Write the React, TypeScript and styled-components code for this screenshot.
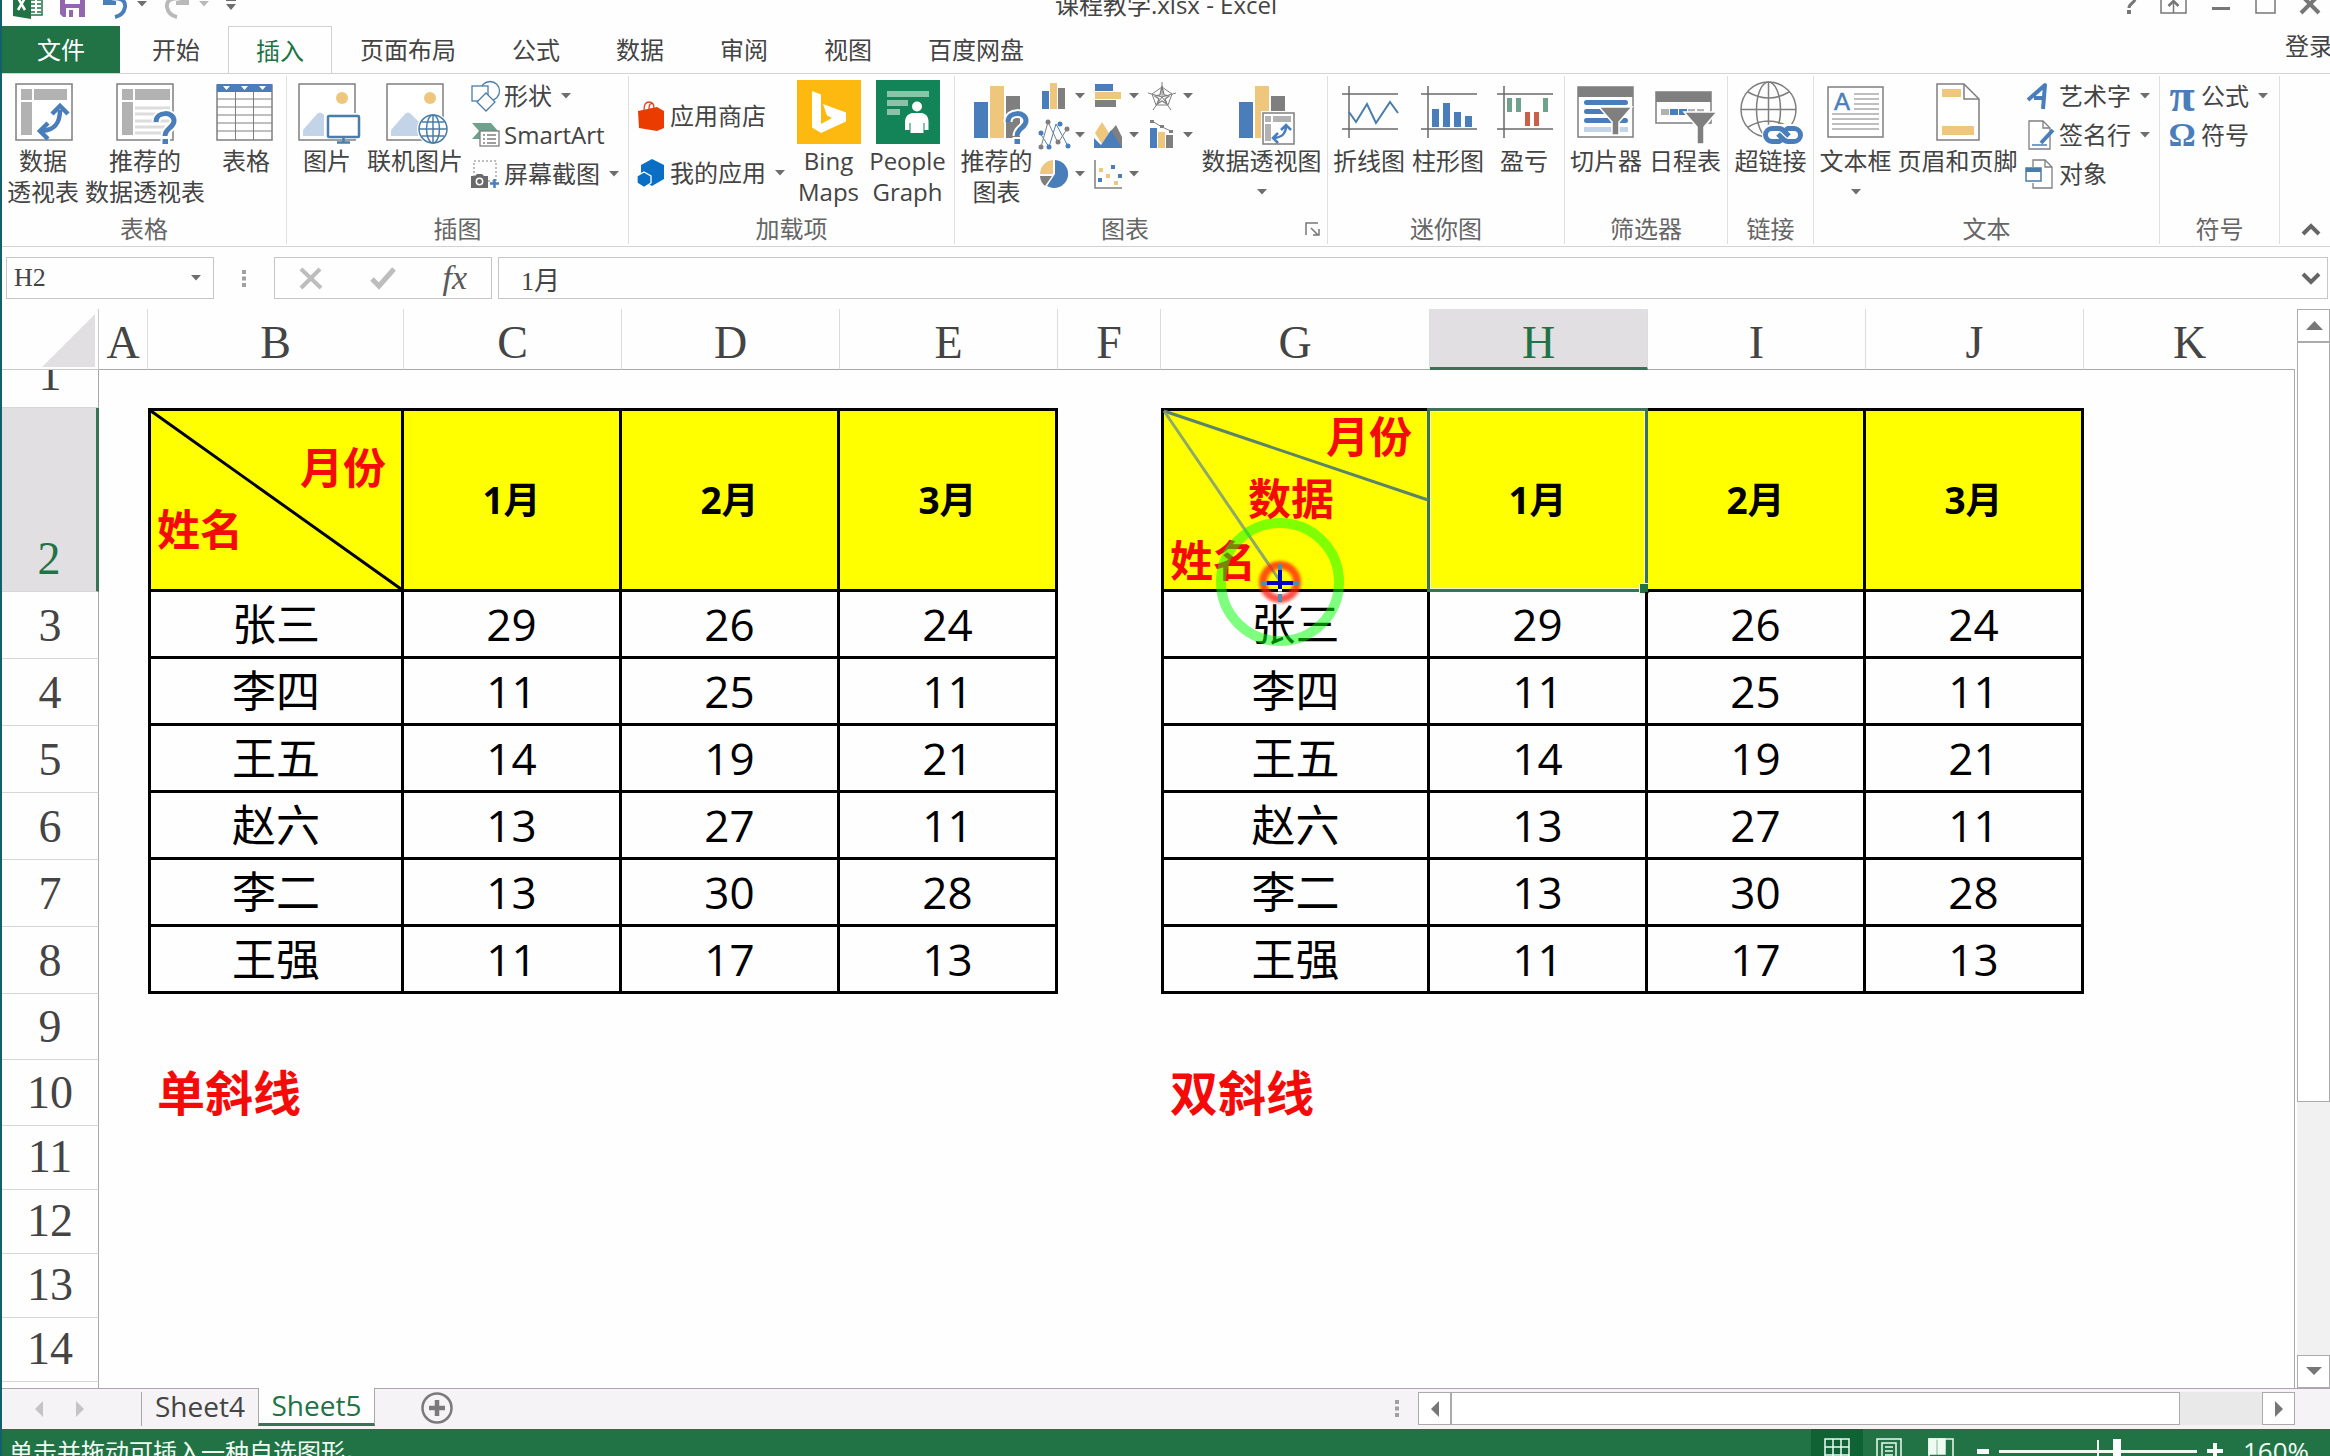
import React from "react";
import styled, { createGlobalStyle, css } from "styled-components";

const BLUE = "#4a7ebb";
const TAN = "#eec67c";
const GRAY = "#7f7f7f";
const SILVER = "#b2b2b2";
const GREEN = "#217346";
const INK = "#444444";
const LINE = "#d2d2d2";
const UI = '"Open Sans", "Noto Sans CJK SC", sans-serif';
const SERIF = '"Liberation Serif", "Noto Sans CJK SC", serif';

const GlobalStyle = createGlobalStyle`
  * { box-sizing: border-box; }
  body { margin: 0; background: #fefefe; }
  button { border: 0; padding: 0; margin: 0; background: none; color: inherit; font: inherit; cursor: pointer; }
  input { font: inherit; color: inherit; outline: none; }
  svg { display: block; overflow: visible; flex: none; }
`;

const Window = styled.div`
  height: 100vh;
  display: flex;
  flex-direction: column;
  overflow: hidden;
  border-left: 2px solid #12606c;
  background: #fefefe;
  color: ${INK};
  font: 24px/31px ${UI};
  white-space: nowrap;
`;

/* ---------- title bar ---------- */

const TitleBar = styled.header`
  flex: 0 0 26px;
  display: flex;
  align-items: flex-end;
  overflow: hidden;
`;

const TitleRow = styled.div`
  flex: 1;
  height: 44px;
  display: grid;
  grid-template-columns: 1fr auto 1fr;
  align-items: center;
`;

const QuickAccess = styled.div`
  display: flex;
  align-items: center;
  gap: 17px;
  padding-left: 11px;
`;

const SplitButton = styled.div`
  display: flex;
  align-items: center;
  gap: 9px;
`;

const Title = styled.h1`
  margin: 0;
  font: inherit;
`;

const WindowButtons = styled.div`
  display: flex;
  justify-content: flex-end;
  align-items: center;
  gap: 24px;
  padding-right: 10px;
`;

/* ---------- tabs ---------- */

const TabStrip = styled.nav`
  flex: 0 0 48px;
  display: flex;
  align-items: stretch;
  border-bottom: 1px solid ${LINE};
  overflow: hidden;
`;

const FileTab = styled.button`
  width: 118px;
  margin-right: 4px;
  background: ${GREEN};
  color: #fff;
`;

const Tab = styled.button<{ $active?: boolean }>`
  padding: 0 28px;
  ${(p) =>
    p.$active &&
    css`
      padding: 0 27px;
      border: 1px solid ${LINE};
      border-bottom: 0;
      color: ${GREEN};
    `}
`;

const SignIn = styled.a`
  margin-left: auto;
  margin-right: -3px;
  align-self: center;
  padding-bottom: 8px;
  color: inherit;
  text-decoration: none;
`;

/* ---------- ribbon ---------- */

const Ribbon = styled.div`
  flex: 0 0 173px;
  display: flex;
  border-bottom: 1px solid ${LINE};
`;

const GroupBox = styled.section`
  display: flex;
  flex-direction: column;
  margin: 2px 0;
  border-right: 1px solid #e0e0e0;
`;

const GroupBody = styled.div<{ $end?: number }>`
  flex: 1;
  display: flex;
  padding-right: ${(p) => p.$end ?? 0}px;
`;

const GroupFooter = styled.div<{ $launcher?: boolean }>`
  position: relative;
  padding-right: ${(p) => (p.$launcher ? 32 : 0)}px;
  text-align: center;
  color: #666;
`;

const Launcher = styled.button`
  position: absolute;
  right: 7px;
  top: 9px;
`;

const BigButton = styled.button<{ $w: number }>`
  width: ${(p) => p.$w}px;
  display: flex;
  flex-direction: column;
  align-items: center;
  padding-top: 4px;
  svg + span { margin-top: 1px; }
`;

const BigArrow = styled.span`
  height: 31px;
  display: flex;
  align-items: center;
`;

const Stack = styled.div<{ $w: number; $row?: number; $top?: number }>`
  width: ${(p) => p.$w}px;
  padding-top: ${(p) => p.$top ?? 0}px;
  display: flex;
  flex-direction: column;
  align-items: flex-start;
  > * { height: ${(p) => p.$row ?? 39}px; }
`;

const SmallButton = styled.button`
  display: flex;
  align-items: center;
  gap: 5px;
  padding-left: 8px;
  span + svg { margin-left: 4px; }
`;

const ChartGrid = styled.div`
  display: grid;
  grid-template-columns: repeat(3, 54px);
  grid-auto-rows: 39px;
  align-content: start;
  padding-left: 2px;
  button {
    display: flex;
    align-items: center;
    gap: 7px;
  }
`;

const Greek = styled.span<{ $size: number }>`
  width: 28px;
  text-align: center;
  font: bold ${(p) => p.$size}px/34px "Liberation Serif", serif;
  color: ${BLUE};
`;

const Collapse = styled.button`
  margin: auto 10px 10px auto;
`;

/* ---------- formula bar ---------- */

const FormulaBar = styled.div`
  flex: 0 0 62px;
  display: flex;
  align-items: flex-start;
  padding: 10px 2px 0 4px;
  font-family: ${SERIF};
  font-size: 26px;
`;

const Field = styled.div<{ $w?: number; $end: number }>`
  ${(p) => (p.$w ? `width: ${p.$w}px;` : "flex: 1;")}
  height: 42px;
  display: flex;
  align-items: center;
  border: 1px solid #c6c6c6;
  padding-right: ${(p) => p.$end}px;
`;

const TextInput = styled.input<{ $pad: number }>`
  flex: 1;
  min-width: 0;
  height: 100%;
  border: 0;
  padding: 0 0 0 ${(p) => p.$pad}px;
  background: none;
`;

const Grip = styled.div`
  width: 60px;
  display: flex;
  justify-content: center;
  padding-top: 13px;
`;

const EditButtons = styled.div`
  width: 218px;
  height: 42px;
  display: flex;
  align-items: center;
  justify-content: space-between;
  padding: 0 24px;
  margin-right: 6px;
  border: 1px solid #c6c6c6;
`;

const Fx = styled.button`
  font: italic 34px/34px "Liberation Serif", serif;
  color: #5a5a5a;
`;

/* ---------- sheet ---------- */

const Workspace = styled.main`
  flex: 1;
  min-height: 0;
  display: flex;
`;

const SheetArea = styled.div`
  flex: 1;
  min-width: 0;
  overflow: hidden;
`;

const Grid = styled.table`
  width: 100%;
  table-layout: fixed;
  border-collapse: separate;
  border-spacing: 0;
  td, th { padding: 0; }
`;

const ColHead = styled.th<{ $on?: boolean }>`
  height: 61px;
  padding-bottom: 3px !important;
  vertical-align: bottom;
  font: 46px/46px "Liberation Serif", serif;
  color: ${INK};
  border-right: 1px solid #dcdcdc;
  border-bottom: 1px solid #a8a8a8;
  &:last-child { border-right: 0; }
  ${(p) =>
    p.$on &&
    css`
      background: #e1dfe2;
      color: ${GREEN};
      border-bottom: 3px solid #3a7257;
      padding-bottom: 1px !important;
    `}
`;

const Corner = styled.td`
  border-right: 1px solid #c8c8c8;
  border-bottom: 1px solid #c8c8c8;
  svg { margin: 3px 3px 0 auto; }
`;

const RowHead = styled.th<{ $on?: boolean; $h: number }>`
  height: ${(p) => p.$h}px;
  vertical-align: bottom;
  border-right: 1px solid #a8a8a8;
  border-bottom: 1px solid #d6d6d6;
  font: 46px/46px "Liberation Serif", serif;
  color: ${INK};
  div {
    height: ${(p) => Math.min(p.$h - 1, 60)}px;
    display: flex;
    align-items: flex-end;
    justify-content: center;
    padding-bottom: 9px;
    overflow: hidden;
  }
  ${(p) =>
    p.$on &&
    css`
      background: #e1dfe2;
      color: ${GREEN};
      border-right: 3px solid #3a7257;
    `}
`;

const Cell = styled.td<{ $head?: boolean; $first?: boolean }>`
  position: relative;
  text-align: center;
  vertical-align: middle;
  font: 44px/60px ${UI};
  color: #000;
  border-right: 3px solid #000;
  border-bottom: 3px solid #000;
  ${(p) => p.$first && "border-left: 3px solid #000;"}
  ${(p) =>
    p.$head &&
    css`
      background: #ffff00;
      border-top: 3px solid #000;
      font-weight: bold;
      font-size: 37px;
    `}
`;

const Blank = styled.td<{ $edge?: boolean }>`
  ${(p) => p.$edge && "border-right: 1px solid #a8a8a8;"}
`;

const Note = styled.td`
  padding-left: 9px !important;
  font: bold 48px/60px ${UI};
  color: #f50a0a;
`;

const HeadLines = styled.div`
  display: flex;
  flex-direction: column;
  margin: -6px 0 -4px;
  padding: 0 15px 0 6px;
  font: bold 43px/62px ${UI};
  color: #f50a0a;
`;

const HeadLine = styled.span<{ $align: "start" | "center" | "end" }>`
  align-self: ${(p) => p.$align};
`;

const Overlay = styled.svg`
  position: absolute;
  left: 0;
  top: 0;
  z-index: 2;
  pointer-events: none;
`;

const Selection = styled.div`
  position: absolute;
  inset: -3px;
  border: 3px solid #3a7257;
  box-shadow: inset 0 0 0 1px #f4f4d0;
  &::after {
    content: "";
    position: absolute;
    right: -4px;
    bottom: -4px;
    width: 9px;
    height: 9px;
    background: ${GREEN};
    outline: 1px solid #f4f4d0;
  }
`;

const VScroll = styled.div`
  width: 33px;
  margin-left: 2px;
  display: flex;
  flex-direction: column;
  background: #f1f1f1;
`;

const ScrollButton = styled.button`
  flex: 0 0 33px;
  min-height: 33px;
  display: flex;
  align-items: center;
  justify-content: center;
  background: #fff;
  border: 1px solid #ababab;
`;

const ScrollThumb = styled.div<{ $grow: number }>`
  flex: ${(p) => p.$grow};
  background: #fff;
  border: 1px solid #ababab;
`;

const ScrollTrack = styled.div<{ $grow: number }>`
  flex: ${(p) => p.$grow};
`;

/* ---------- sheet tabs ---------- */

const SheetBar = styled.div`
  flex: 0 0 41px;
  display: flex;
  align-items: flex-start;
  background: #f5f3f6;
  border-top: 1px solid #a8a8a8;
  font-size: 28px;
`;

const SheetNav = styled.div`
  width: 140px;
  height: 34px;
  margin-top: 3px;
  display: flex;
  align-items: center;
  gap: 33px;
  padding-left: 33px;
  border-right: 1px solid #a8a8a8;
`;

const SheetTab = styled.button<{ $active?: boolean }>`
  width: 116px;
  height: 33px;
  line-height: 32px;
  ${(p) =>
    p.$active &&
    css`
      width: 117px;
      height: 38px;
      margin-top: -1px;
      padding-bottom: 2px;
      background: #fefefe;
      color: ${GREEN};
      border: 1px solid #a8a8a8;
      border-top: 0;
      border-bottom: 3px solid #3a7257;
    `}
`;

const AddSheet = styled.button`
  margin: 3px 0 0 46px;
`;

const HScroll = styled.div`
  width: 877px;
  height: 33px;
  margin: 3px 35px 0 19px;
  display: flex;
  background: #e9e9e9;
`;

const HGrip = styled.div`
  margin: 11px 0 0 auto;
`;

/* ---------- status bar ---------- */

const StatusBar = styled.footer`
  flex: 0 0 27px;
  overflow: hidden;
  background: ${GREEN};
  color: #eefaf2;
`;

const StatusRow = styled.div`
  height: 44px;
  display: flex;
  align-items: center;
  padding: 0 25px 0 7px;
`;

const ViewButton = styled.button<{ $on?: boolean }>`
  width: 52px;
  height: 44px;
  display: flex;
  align-items: center;
  justify-content: center;
  ${(p) => p.$on && "background: #0f6234;"}
`;

const ZoomRange = styled.input`
  appearance: none;
  width: 198px;
  height: 24px;
  margin: 0 10px;
  background:
    linear-gradient(#eefaf2, #eefaf2) center / 2px 22px no-repeat,
    linear-gradient(#eefaf2, #eefaf2) center / 100% 3px no-repeat;
  &::-webkit-slider-thumb {
    appearance: none;
    width: 8px;
    height: 24px;
    background: #fff;
  }
`;

const ZoomLabel = styled.span`
  width: 62px;
  margin-left: 20px;
  font-size: 26px;
`;

const Push = styled.div`
  margin-left: auto;
`;

/* ---------- drawings ---------- */

const Down = ({ c = "#6e6e6e" }: { c?: string }) => (
  <svg width="10" height="6" viewBox="0 0 10 6"><path d="M0 0H10L5 5.5Z" fill={c} /></svg>
);

const Tri = ({ dir, c = "#777" }: { dir: "up" | "down" | "left" | "right"; c?: string }) => {
  const d = {
    up: "M0 9L8.500 0L17 9Z",
    down: "M0 0L8 8L16 0Z",
    left: "M8 0V16L0 8Z",
    right: "M0 0V16L8 8Z",
  }[dir];
  const wide = dir === "up" || dir === "down";
  return <svg width={wide ? 16 : 8} height={wide ? 9 : 16}><path d={d} fill={c} /></svg>;
};

const Chevron = ({ up }: { up?: boolean }) => (
  <svg width="18" height="12" viewBox="0 0 18 12">
    <path d={up ? "M1 10L9 2L17 10" : "M1 2L9 10L17 2"} fill="none" stroke="#666" strokeWidth="4" />
  </svg>
);

const Dots = () => (
  <svg width="4" height="17"><path d="M0 0h4v4H0zM0 6.500h4v4H0zM0 13h4v4H0z" fill="#a0a0a0" /></svg>
);

const Big = ({ children }: { children: React.ReactNode }) => (
  <svg width="64" height="64" viewBox="0 0 64 64" fill="none">{children}</svg>
);

const Small = ({ children }: { children: React.ReactNode }) => (
  <svg width="28" height="30" viewBox="0 0 28 30" fill="none">{children}</svg>
);

const Question = () => (
  <g>
    {["#fefefe", BLUE].map((c, i) => (
      <g key={c}>
        <path d="M43 42C43 31 61 31 61 41C61 48 52 48 52 56" stroke={c} strokeWidth={i ? 5 : 9} />
        <path d={i ? "M49.500 59h5.500v5h-5.500z" : "M47.500 57h9.500v8h-9.500z"} fill={c} />
      </g>
    ))}
  </g>
);

const TwoWay = () => (
  <g>
    <path d="M31 51C44 50 49 43 49 30" stroke={BLUE} strokeWidth="4.500" />
    <path d="M41 34L49 26L57 34M37 43L29 51L37 59" stroke={BLUE} strokeWidth="4.500" />
  </g>
);

const Frame = ({ x, y, w, h }: { x: number; y: number; w: number; h: number }) => (
  <rect x={x} y={y} width={w} height={h} fill="#fff" stroke={GRAY} strokeWidth="1.500" />
);

const PivotIcon = () => (
  <Big>
    <Frame x={5} y={4} w={56} h={56} />
    <path d="M10 9h11v11H10zM23 9h33v11H23zM10 22h11v33H10z" fill={SILVER} />
    <TwoWay />
  </Big>
);

const RecPivotIcon = () => (
  <Big>
    <Frame x={4} y={4} w={56} h={56} />
    <path d="M9 9h11v11H9zM22 9h35v11H22zM9 22h11v33H9z" fill={SILVER} />
    <path d="M22 28H57M22 34H57M22 41H57M22 47H57M22 53H57" stroke="#dcdcdc" strokeWidth="3" />
    <Question />
  </Big>
);

const TableIcon = () => (
  <Big>
    <Frame x={3} y={5} w={55} h={55} />
    <path d="M3 4h55v8H3z" fill={BLUE} />
    <path d="M9 6h7l-3.500 4zM27 6h7l-3.500 4zM45 6h7l-3.500 4z" fill="#fff" />
    <path d="M3 19H58M3 27H58M3 35H58M3 43H58M3 51H58M21.500 12V60M39.500 12V60" stroke={GRAY} />
  </Big>
);

const Photo = () => (
  <g>
    <Frame x={4} y={4} w={56} h={56} />
    <circle cx="47" cy="18" r="6" fill={TAN} />
    <path d="M8 56V50L22 34Q25 31 28 34L40 46V56Z" fill="#c3d3e8" />
  </g>
);

const PictureIcon = () => (
  <Big>
    <Photo />
    <rect x="29" y="33" width="38" height="26" fill="#fefefe" />
    <rect x="33" y="36" width="31" height="21" rx="1" fill="#fff" stroke="#4a7da8" strokeWidth="2.500" />
    <path d="M48.500 57V62M42 62.500H55" stroke="#4a7da8" strokeWidth="2.500" />
  </Big>
);

const OnlineIcon = () => (
  <Big>
    <Photo />
    <circle cx="50" cy="49" r="16" fill="#fefefe" />
    <g stroke="#4a7da8" strokeWidth="1.500">
      <circle cx="50" cy="49" r="14" />
      <ellipse cx="50" cy="49" rx="6.500" ry="14" />
      <path d="M50 35V63M36 49H64M38.500 42H61.500M38.500 56H61.500" />
    </g>
  </Big>
);

const BingIcon = () => (
  <Big>
    <rect width="64" height="64" fill="#fdb90f" />
    <path d="M15 11L24 14.500V44L35 38L30 35.500L26 24L49 32.500V41.500L24 53L15 47.500Z" fill="#fff" />
  </Big>
);

const PeopleIcon = () => (
  <Big>
    <rect width="64" height="64" fill="#138457" />
    <path d="M11 11H53V17H11zM11 20H32V26H11zM11 29H24V35H11z" fill="#8ac3a8" />
    <circle cx="41" cy="26.500" r="5" fill="#fff" />
    <path d="M36 33H46Q52 34 52.500 41V50H48.500V43H47.500V53H34.500V43H33.500V50H29V41Q30 34 36 33Z" fill="#fff" />
  </Big>
);

const Bars = () => (
  <g>
    <path d="M9 22h14v36H9z" fill={BLUE} />
    <path d="M25 6h14v52H25z" fill={TAN} />
    <path d="M41 16h14v42H41z" fill={GRAY} />
  </g>
);

const RecChartIcon = () => <Big><Bars /><Question /></Big>;

const PivotChartIcon = () => (
  <Big>
    <Bars />
    <rect x="31" y="31" width="35" height="34" fill="#fefefe" />
    <Frame x={33} y={33} w={31} h={31} />
    <path d="M35 36h6v6h-6zM43 36h18v6H43zM35 44h6v17h-6z" fill={SILVER} />
    <path d="M44 58C53 57 56 53 56 46M51 50L56 45L61 50M48 53L43 58L48 63" stroke={BLUE} strokeWidth="2.500" />
  </Big>
);

const Axes = () => <path d="M5 14H61M5 49H61M12 6V58" stroke="#6a6a6a" strokeWidth="1.500" />;

const SparkLineIcon = () => (
  <Big><Axes /><path d="M12 32L19 42L30 24L39 43L53 22L61 33" stroke="#4a7da8" strokeWidth="2" /></Big>
);

const SparkColIcon = () => (
  <Big><Axes /><path d="M16 29h7v18h-7zM27 23h7v24h-7zM38 32h7v15h-7zM49 36h7v11h-7z" fill={BLUE} /></Big>
);

const WinLossIcon = () => (
  <Big>
    <Axes />
    <path d="M15 18h5v14h-5zM24 18h5v14h-5zM51 18h5v14h-5z" fill="#6ea28c" />
    <path d="M33 32h5v14h-5zM42 32h5v14h-5z" fill="#c8604a" />
  </Big>
);

const Funnel = ({ x, y, s }: { x: number; y: number; s: number }) => (
  <path d={`M${x} ${y}h33l-13 15v${s}h-7v-${s}z`} fill={GRAY} stroke="#fefefe" strokeWidth="1.500" />
);

const SlicerIcon = () => (
  <Big>
    <Frame x={4} y={7} w={55} h={50} />
    <path d="M4 7h55v10H4z" fill={GRAY} />
    <path d="M12.500 22.500H51.500M12.500 31.500H51.500M12.500 40.500H51.500" stroke={BLUE} strokeWidth="5" strokeLinecap="round" />
    <path d="M10 47h44v5H10z" fill="#c3d3e8" />
    <Funnel x={25} y={27} s={13} />
  </Big>
);

const TimelineIcon = () => (
  <Big>
    <Frame x={3} y={12} w={55} h={31} />
    <path d="M3 12h55v10H3z" fill={GRAY} />
    <path d="M8 29h8v6H8zM35 29h7v6h-7zM44 29h7v6h-7z" fill={SILVER} />
    <path d="M17 29h8v6h-8zM26 29h8v6h-8z" fill={BLUE} />
    <Funnel x={31} y={32} s={17} />
  </Big>
);

const LinkIcon = () => (
  <Big>
    <g stroke={GRAY} strokeWidth="1.500">
      <circle cx="29.500" cy="29.500" r="27.500" />
      <path d="M2 29.500H57M29.500 2V57M9 12Q29.500 24 50 12M9 47Q29.500 35 50 47" />
      <ellipse cx="29.500" cy="29.500" rx="12" ry="27.500" />
    </g>
    <rect x="23" y="44" width="42" height="22" rx="10" fill="#fefefe" />
    <g stroke={BLUE} strokeWidth="5">
      <path d="M44 59L40 61.500H33A6.500 6.500 0 0 1 33 48.500H40Q43 48.500 46 52L50 56" />
      <path d="M45 51L49 48.500H55A6.500 6.500 0 0 1 55 61.500H49Q46 61.500 43 58L39 54" />
    </g>
  </Big>
);

const TextBoxIcon = () => (
  <Big>
    <Frame x={4} y={7} w={55} h={50} />
    <text x="10" y="30" fontSize="24" fontFamily="Liberation Sans, sans-serif" fill={BLUE} stroke={BLUE} strokeWidth=".5">A</text>
    <path d="M30 14H55M30 19H55M30 24H55M30 29H55M8 34H55M8 39H55M8 44H55M8 49H55" stroke={GRAY} />
  </Big>
);

const HeaderFooterIcon = () => (
  <Big>
    <path d="M11 4H38L53 19V60H11Z" fill="#fff" stroke={GRAY} strokeWidth="1.500" />
    <path d="M38 4V19H53" stroke={GRAY} strokeWidth="1.500" />
    <path d="M16 9h19v8H16zM16 46h32v9H16z" fill={TAN} />
  </Big>
);

const ShapesIcon = () => (
  <Small>
    <g stroke="#4a7da8" strokeWidth="1.300" fill="#fefefe">
      <circle cx="19" cy="10" r="9.500" />
      <rect x="1" y="5" width="16" height="15" />
      <path d="M15 12L24 21L15 30L6 21Z" />
    </g>
  </Small>
);

const SmartArtIcon = () => (
  <Small>
    <path d="M1 3H20L27 11L20 19H1L8 11Z" fill="#6ea28c" />
    <rect x="9" y="11" width="19" height="15" fill="#fff" stroke={GRAY} strokeWidth="1.300" />
    <path d="M12 15h2M16 15h9M12 19h2M16 19h9M12 23h2M16 23h9" stroke={GRAY} strokeWidth="1.300" />
  </Small>
);

const ScreenshotIcon = () => (
  <Small>
    <rect x="3" y="2" width="22" height="20" stroke={GRAY} strokeDasharray="2 2" />
    <path d="M0 17H4L6 15H11L13 17H17V29H0Z" fill="#6a6a6a" />
    <circle cx="8.500" cy="22.500" r="3.200" stroke="#fff" strokeWidth="1.500" />
    <path d="M19 24.500H28M23.500 20V29" stroke={BLUE} strokeWidth="2.500" />
  </Small>
);

const StoreIcon = () => (
  <Small>
    <path d="M7 9Q7 1 12 1Q17 1 17 7M12 8Q12 1 16 3" stroke="#e0431b" strokeWidth="1.300" />
    <path d="M1 10L20 6L27 10V27L20 30L2 27Z" fill="#eb3c00" />
  </Small>
);

const AppsIcon = () => (
  <Small>
    <path d="M15 1L27 7V21L15 28L4 21V7Z" fill="#0a6fc4" />
    <path d="M7 14L14 18V25L7 29.500L0 25V18Z" fill="#0a6fc4" stroke="#fefefe" strokeWidth="1.300" />
  </Small>
);

const WordArtIcon = () => (
  <Small>
    <path d="M2 19L19 4L17 28M8 17H18" stroke={BLUE} strokeWidth="4" strokeLinejoin="round" />
  </Small>
);

const SignatureIcon = () => (
  <Small>
    <path d="M3 1H17L24 8V29H3Z" fill="#fff" stroke={GRAY} strokeWidth="1.300" />
    <path d="M17 1V8H24" stroke={GRAY} strokeWidth="1.300" />
    <path d="M6 25H21" stroke={BLUE} strokeWidth="1.500" />
    <path d="M27 10L15 23" stroke={BLUE} strokeWidth="4" />
  </Small>
);

const ObjectIcon = () => (
  <Small>
    <path d="M7 1H19L26 8V29H7Z" fill="#fff" stroke={GRAY} strokeWidth="1.300" />
    <path d="M19 1V8H26" stroke={GRAY} strokeWidth="1.300" />
    <rect x="-1" y="8" width="17" height="16" fill="#fefefe" />
    <rect x="0" y="9" width="15" height="13" fill="#fff" stroke="#4a7da8" strokeWidth="1.500" />
    <path d="M0 9h15v4H0z" fill="#4a7da8" />
  </Small>
);

const miniCharts: React.ReactNode[] = [
  <><path d="M2 10h7v18H2z" fill={BLUE} /><path d="M10 2h7v26h-7z" fill={TAN} /><path d="M18 7h7v21h-7z" fill={GRAY} /></>,
  <><path d="M1 3h18v7H1z" fill={BLUE} /><path d="M1 11h26v7H1z" fill={TAN} /><path d="M1 19h21v7H1z" fill={GRAY} /></>,
  <g stroke={GRAY}>
    <path d="M14 1V16M0 12L14 16L28 12M5 29L14 16L23 29" />
    <path d="M14 6L24 13L20 24H8L4 13Z" />
    <path d="M14 5L16 14L21 15L17 18L19 23L14 20L9 23L11 18L7 15L12 14Z" strokeWidth="1.300" />
  </g>,
  <>
    <path d="M0 13L9 27L16 4L28 26" stroke={BLUE} /><path d="M1 27L8 2L18 23L27 9" stroke={GRAY} />
    {[[1, 13], [9, 27], [20, 4], [28, 26]].map(([x, y]) => <circle key={x} cx={x} cy={y} r="2.500" fill={BLUE} />)}
    {[[1, 27], [8, 2], [18, 22], [27, 9]].map(([x, y]) => <circle key={x} cx={x} cy={y} r="2.500" fill={GRAY} />)}
  </>,
  <><path d="M16 12L22 5L28 17V28H16z" fill={GRAY} /><path d="M1 13L8 2L15 13L8 24z" fill={TAN} /><path d="M0 18L7 25L17 10L28 28H0z" fill={BLUE} /></>,
  <><path d="M2 8h7v20H2z" fill={BLUE} /><path d="M10 12h7v16h-7z" fill={TAN} /><path d="M18 15h7v13h-7z" fill={GRAY} /><path d="M4 1L14 7L23 11" stroke={GRAY} /><path d="M2 0h4v3H2zM12 5h4v3h-4zM21 10h4v3h-4z" fill={GRAY} /></>,
  <><path d="M15 15V1A14 14 0 1 1 7 27Z" fill={BLUE} /><path d="M13 15H0A14 14 0 0 1 13 1Z" fill={TAN} /><path d="M12 17L5 27A14 14 0 0 1 0 17Z" fill={GRAY} /></>,
  <><path d="M1 1V29H28" stroke={GRAY} strokeWidth="1.500" /><path d="M5 9h4v4H5zM12 15h4v4h-4zM20 22h4v4h-4z" fill={TAN} /><path d="M17 6h4v4h-4zM4 19h4v4H4zM24 15h4v4h-4z" fill={BLUE} /></>,
];
const miniNames = ["柱形图", "条形图", "雷达图", "折线图", "面积图", "组合图", "饼图", "散点图"];

const ExcelLogo = () => (
  <svg width="30" height="30" viewBox="0 0 30 30">
    <rect x="14" y="3" width="15" height="23" fill="#fff" stroke={GREEN} strokeWidth="1.500" />
    <path d="M18 7h4M24 7h4M18 11h4M24 11h4M18 15h4M24 15h4M18 19h4M24 19h4M18 23h4M24 23h4" stroke={GREEN} strokeWidth="1.500" />
    <path d="M0 3L18 0V30L0 27Z" fill={GREEN} />
    <path d="M5 9L12 21M12 9L5 21" stroke="#fff" strokeWidth="2.500" />
  </svg>
);

const SaveIcon = () => (
  <svg width="25" height="26" viewBox="0 0 25 26">
    <path d="M0 0H25V26H3L0 23Z" fill="#9566b0" />
    <path d="M5 2h15v11H5zM6 17h13v9H6z" fill="#fff" />
    <path d="M9 19h4v7H9z" fill="#9566b0" />
  </svg>
);

const UndoIcon = ({ c, flip }: { c: string; flip?: boolean }) => (
  <svg width="26" height="28" viewBox="0 0 26 28" fill="none">
    <g transform={flip ? "matrix(-1 0 0 1 26 0)" : undefined} stroke={c} strokeWidth="4">
      <path d="M3 12C14 5 24 9 23 17C22 23 18 26 13 27" />
      <path d="M3 1V13H14" />
    </g>
  </svg>
);

/* ---------- pieces ---------- */

type GroupProps = { label: string; children: React.ReactNode; launcher?: boolean; end?: number };

const Group = ({ label, children, launcher, end }: GroupProps) => (
  <GroupBox aria-label={label}>
    <GroupBody $end={end}>{children}</GroupBody>
    <GroupFooter $launcher={launcher}>
      {label}
      {launcher && (
        <Launcher aria-label="图表选项">
          <svg width="15" height="14" fill="none" stroke="#777" strokeWidth="1.500">
            <path d="M1 13V1H13M6 6L13 13M14 7V13H8" />
          </svg>
        </Launcher>
      )}
    </GroupFooter>
  </GroupBox>
);

const Command = ({ w, icon, lines, arrow }: { w: number; icon: React.ReactNode; lines: string[]; arrow?: boolean }) => (
  <BigButton $w={w}>
    {icon}
    {lines.map((l) => <span key={l}>{l}</span>)}
    {arrow && <BigArrow><Down /></BigArrow>}
  </BigButton>
);

const Item = ({ icon, text, arrow }: { icon: React.ReactNode; text: string; arrow?: boolean }) => (
  <SmallButton>
    {icon}
    <span>{text}</span>
    {arrow && <Down />}
  </SmallButton>
);

const people: [string, number, number, number][] = [
  ["张三", 29, 26, 24],
  ["李四", 11, 25, 11],
  ["王五", 14, 19, 21],
  ["赵六", 13, 27, 11],
  ["李二", 13, 30, 28],
  ["王强", 11, 17, 13],
];

const columns: [string, number | undefined][] = [
  ["A", 49], ["B", 256], ["C", 218], ["D", 218], ["E", 218], ["F", 103],
  ["G", 269], ["H", 218], ["I", 218], ["J", 218], ["K", undefined],
];

const months = ["1月", "2月", "3月"];

const SingleSlash = () => (
  <Cell $head $first>
    <Overlay width="1" height="1"><path d="M0 0L250 178" stroke="#000" strokeWidth="3" /></Overlay>
    <HeadLines>
      <HeadLine $align="end">月份</HeadLine>
      <HeadLine $align="start">姓名</HeadLine>
    </HeadLines>
  </Cell>
);

const DoubleSlash = () => (
  <Cell $head $first>
    <HeadLines>
      <HeadLine $align="end">月份</HeadLine>
      <HeadLine $align="center">数据</HeadLine>
      <HeadLine $align="start">姓名</HeadLine>
    </HeadLines>
    <Overlay width="1" height="1" fill="none">
      <defs>
        <filter id="soft" x="-50%" y="-50%" width="200%" height="200%"><feGaussianBlur stdDeviation="1.500" /></filter>
      </defs>
      <path d="M0 0L264 89" stroke="#5b8468" strokeWidth="3" />
      <path d="M0 0L116 170" stroke="#7d9a78" strokeOpacity=".85" strokeWidth="3" />
      <circle cx="116" cy="171" r="59" stroke="#00ff00" strokeOpacity=".5" strokeWidth="10" />
      <circle cx="116" cy="171" r="17" stroke="#ff1e0a" strokeOpacity=".75" strokeWidth="8" filter="url(#soft)" />
      <path d="M97 172H135M116 153V191" stroke="#4a8fb0" strokeWidth="4" />
      <path d="M103 172H129M116 159V178" stroke="#0000c8" strokeWidth="4" />
      <path d="M116 178V184" stroke="#fff" strokeWidth="4" strokeDasharray="2 1" />
    </Overlay>
  </Cell>
);

const Sheet = () => (
  <Grid>
    <colgroup>
      <col style={{ width: 97 }} />
      {columns.map(([c, w]) => <col key={c} style={w ? { width: w } : undefined} />)}
    </colgroup>
    <thead>
      <tr>
        <Corner><svg width="53" height="53"><path d="M53 0V53H0Z" fill="#e1dfe2" /></svg></Corner>
        {columns.map(([c]) => <ColHead key={c} scope="col" $on={c === "H"}>{c}</ColHead>)}
      </tr>
    </thead>
    <tbody>
      <tr>
        <RowHead scope="row" $h={38}><div>1</div></RowHead>
        <Blank colSpan={10} /><Blank $edge />
      </tr>
      <tr>
        <RowHead scope="row" $h={184} $on><div>2</div></RowHead>
        <Blank />
        <SingleSlash />
        {months.map((m) => <Cell key={m} $head>{m}</Cell>)}
        <Blank />
        <DoubleSlash />
        {months.map((m, i) => <Cell key={m} $head>{m}{i === 0 && <Selection />}</Cell>)}
        <Blank $edge />
      </tr>
      {people.map((row, r) => (
        <tr key={row[0]}>
          <RowHead scope="row" $h={67}><div>{r + 3}</div></RowHead>
          <Blank />
          {row.map((v, i) => <Cell key={i} $first={i === 0}>{v}</Cell>)}
          <Blank />
          {row.map((v, i) => <Cell key={i} $first={i === 0}>{v}</Cell>)}
          <Blank $edge />
        </tr>
      ))}
      <tr><RowHead scope="row" $h={66}><div>9</div></RowHead><Blank colSpan={10} /><Blank $edge /></tr>
      <tr>
        <RowHead scope="row" $h={66}><div>10</div></RowHead>
        <Blank />
        <Note colSpan={5}>单斜线</Note>
        <Note colSpan={4}>双斜线</Note>
        <Blank $edge />
      </tr>
      {[11, 12, 13, 14].map((n) => (
        <tr key={n}><RowHead scope="row" $h={64}><div>{n}</div></RowHead><Blank colSpan={10} /><Blank $edge /></tr>
      ))}
      <tr><RowHead $h={64} /><Blank colSpan={10} /><Blank $edge /></tr>
    </tbody>
  </Grid>
);

export default function App() {
  return (
    <Window>
      <GlobalStyle />
      <TitleBar>
        <TitleRow>
          <QuickAccess>
            <ExcelLogo />
            <button aria-label="保存"><SaveIcon /></button>
            <SplitButton><button aria-label="撤消"><UndoIcon c={BLUE} /></button><Down /></SplitButton>
            <SplitButton><button aria-label="恢复"><UndoIcon c="#b9b9b9" flip /></button><Down c="#b9b9b9" /></SplitButton>
            <button aria-label="自定义快速访问工具栏">
              <svg width="10" height="11"><path d="M0 0h10v2H0zM0 5h10l-5 6z" fill="#6e6e6e" /></svg>
            </button>
          </QuickAccess>
          <Title>课程教学.xlsx - Excel</Title>
          <WindowButtons>
            <button aria-label="帮助">
              <svg width="12" height="20" viewBox="0 0 12 20" fill="none"><path d="M2 5C2 0 11 0 11 5C11 9 5 9 5 14" stroke="#777" strokeWidth="3" /><path d="M3 16h4v4H3z" fill="#777" /></svg>
            </button>
            <button aria-label="功能区显示选项">
              <svg width="27" height="20" fill="none" stroke="#777" strokeWidth="1.500"><path d="M1 0H26V19H1ZM13.500 19V7" /><path d="M8.500 12L13.500 7L18.500 12" strokeWidth="2.500" /></svg>
            </button>
            <button aria-label="最小化"><svg width="20" height="20"><path d="M1 13h18v3H1z" fill="#777" /></svg></button>
            <button aria-label="最大化"><svg width="21" height="20"><path d="M1 0H20V19H1Z" fill="none" stroke="#777" strokeWidth="1.500" /></svg></button>
            <button aria-label="关闭"><svg width="20" height="20"><path d="M1 1L19 19M19 1L1 19" stroke="#777" strokeWidth="4" /></svg></button>
          </WindowButtons>
        </TitleRow>
      </TitleBar>

      <TabStrip>
        <FileTab>文件</FileTab>
        {["开始", "插入", "页面布局", "公式", "数据", "审阅", "视图", "百度网盘"].map((t) => (
          <Tab key={t} $active={t === "插入"}>{t}</Tab>
        ))}
        <SignIn href="#">登录</SignIn>
      </TabStrip>

      <Ribbon>
        <Group label="表格">
          <Command w={82} icon={<PivotIcon />} lines={["数据", "透视表"]} />
          <Command w={122} icon={<RecPivotIcon />} lines={["推荐的", "数据透视表"]} />
          <Command w={80} icon={<TableIcon />} lines={["表格"]} />
        </Group>
        <Group label="插图">
          <Command w={80} icon={<PictureIcon />} lines={["图片"]} />
          <Command w={96} icon={<OnlineIcon />} lines={["联机图片"]} />
          <Stack $w={165}>
            <Item icon={<ShapesIcon />} text="形状" arrow />
            <Item icon={<SmartArtIcon />} text="SmartArt" />
            <Item icon={<ScreenshotIcon />} text="屏幕截图" arrow />
          </Stack>
        </Group>
        <Group label="加载项" end={6}>
          <Stack $w={161} $row={57} $top={11}>
            <Item icon={<StoreIcon />} text="应用商店" />
            <Item icon={<AppsIcon />} text="我的应用" arrow />
          </Stack>
          <Command w={77} icon={<BingIcon />} lines={["Bing", "Maps"]} />
          <Command w={81} icon={<PeopleIcon />} lines={["People", "Graph"]} />
        </Group>
        <Group label="图表" launcher end={6}>
          <Command w={83} icon={<RecChartIcon />} lines={["推荐的", "图表"]} />
          <ChartGrid>
            {miniCharts.map((c, i) => (
              <button key={i} aria-label={miniNames[i]}><Small>{c}</Small><Down /></button>
            ))}
          </ChartGrid>
          <Command w={119} icon={<PivotChartIcon />} lines={["数据透视图"]} arrow />
        </Group>
        <Group label="迷你图" end={2}>
          <Command w={82} icon={<SparkLineIcon />} lines={["折线图"]} />
          <Command w={76} icon={<SparkColIcon />} lines={["柱形图"]} />
          <Command w={76} icon={<WinLossIcon />} lines={["盈亏"]} />
        </Group>
        <Group label="筛选器" end={4}>
          <Command w={82} icon={<SlicerIcon />} lines={["切片器"]} />
          <Command w={76} icon={<TimelineIcon />} lines={["日程表"]} />
        </Group>
        <Group label="链接">
          <Command w={85} icon={<LinkIcon />} lines={["超链接"]} />
        </Group>
        <Group label="文本">
          <Command w={83} icon={<TextBoxIcon />} lines={["文本框"]} arrow />
          <Command w={121} icon={<HeaderFooterIcon />} lines={["页眉和页脚"]} />
          <Stack $w={141}>
            <Item icon={<WordArtIcon />} text="艺术字" arrow />
            <Item icon={<SignatureIcon />} text="签名行" arrow />
            <Item icon={<ObjectIcon />} text="对象" />
          </Stack>
        </Group>
        <Group label="符号">
          <Stack $w={119}>
            <Item icon={<Greek $size={46}>π</Greek>} text="公式" arrow />
            <Item icon={<Greek $size={34}>Ω</Greek>} text="符号" />
          </Stack>
        </Group>
        <Collapse aria-label="折叠功能区"><Chevron up /></Collapse>
      </Ribbon>

      <FormulaBar>
        <Field $w={208} $end={12}>
          <TextInput $pad={7} defaultValue="H2" aria-label="名称框" />
          <Down />
        </Field>
        <Grip><Dots /></Grip>
        <EditButtons>
          <button aria-label="取消"><svg width="24" height="22"><path d="M2 2L22 21M21 2L2 21" stroke="#bdbdbd" strokeWidth="4" /></svg></button>
          <button aria-label="输入"><svg width="26" height="22"><path d="M2 12L9 19L24 2" fill="none" stroke="#bdbdbd" strokeWidth="5" /></svg></button>
          <Fx aria-label="插入函数">fx</Fx>
        </EditButtons>
        <Field $end={7}>
          <TextInput $pad={22} defaultValue="1月" aria-label="编辑栏" />
          <Chevron />
        </Field>
      </FormulaBar>

      <Workspace>
        <SheetArea><Sheet /></SheetArea>
        <VScroll>
          <ScrollButton aria-label="向上滚动"><Tri dir="up" /></ScrollButton>
          <ScrollThumb $grow={760} />
          <ScrollTrack $grow={254} />
          <ScrollButton aria-label="向下滚动"><Tri dir="down" /></ScrollButton>
        </VScroll>
      </Workspace>

      <SheetBar>
        <SheetNav>
          <Tri dir="left" c="#c4c4c4" />
          <Tri dir="right" c="#c4c4c4" />
        </SheetNav>
        <SheetTab>Sheet4</SheetTab>
        <SheetTab $active>Sheet5</SheetTab>
        <AddSheet aria-label="新工作表">
          <svg width="32" height="32" fill="none" stroke="#7a7a7a"><circle cx="16" cy="16" r="14.500" strokeWidth="2.500" /><path d="M8 16H24M16 8V24" strokeWidth="4.500" /></svg>
        </AddSheet>
        <HGrip><Dots /></HGrip>
        <HScroll>
          <ScrollButton aria-label="向左滚动"><Tri dir="left" /></ScrollButton>
          <ScrollThumb $grow={729} />
          <ScrollTrack $grow={82} />
          <ScrollButton aria-label="向右滚动"><Tri dir="right" /></ScrollButton>
        </HScroll>
      </SheetBar>

      <StatusBar>
        <StatusRow>
          <span>单击并拖动可插入一种自选图形。</span>
          <Push />
          <ViewButton $on aria-label="普通">
            <svg width="26" height="26" fill="none" stroke="#eefaf2" strokeWidth="1.500"><path d="M1 1H25V25H1ZM9 1V25M17 1V25M1 9H25M1 17H25" /></svg>
          </ViewButton>
          <ViewButton aria-label="页面布局视图">
            <svg width="26" height="26" fill="none" stroke="#eefaf2" strokeWidth="1.500"><path d="M1 1H25V25H1ZM6 5H20V25H6ZM9 9H17M9 13H17M9 17H17M9 21H17" /></svg>
          </ViewButton>
          <ViewButton aria-label="分页预览">
            <svg width="26" height="26" fill="none" stroke="#eefaf2" strokeWidth="1.500"><path d="M1 1H25V25H1Z" /><path d="M1 1h7v15H1zM10 1h7v15h-7z" fill="#eefaf2" /></svg>
          </ViewButton>
          <button aria-label="缩小"><svg width="22" height="16"><path d="M10 6h12v5H10z" fill="#fff" /></svg></button>
          <ZoomRange type="range" min={0} max={100} defaultValue={60} aria-label="缩放" />
          <button aria-label="放大"><svg width="16" height="16"><path d="M0 6h6V0h4v6h6v4h-6v6H6v-6H0z" fill="#fff" /></svg></button>
          <ZoomLabel>160%</ZoomLabel>
        </StatusRow>
      </StatusBar>
    </Window>
  );
}
